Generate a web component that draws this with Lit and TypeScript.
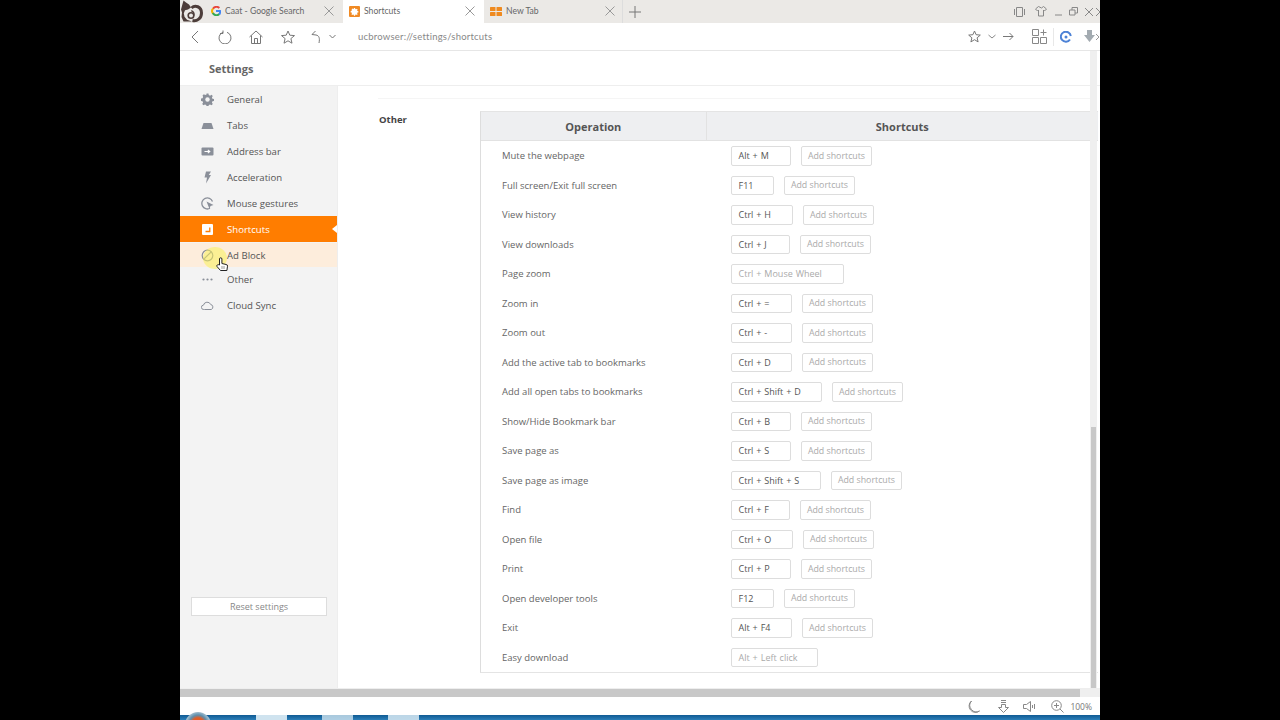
import { LitElement, html, css } from "lit";
import { customElement } from "lit/decorators.js";

const ic = (w: number, h: number, body: any) => html`<svg class="ic" width=${w} height=${h} viewBox="0 0 ${w} ${h}" fill="none" stroke="#777" stroke-width="1">${body}</svg>`;
const s = (str: string) => { const t = document.createElement("template"); t.innerHTML = `<svg xmlns="http://www.w3.org/2000/svg">${str}</svg>`; return Array.from(t.content.firstElementChild!.childNodes); };

const close = () => ic(12, 12, s(`<path d="M1.500 1.500l9 9M10.500 1.500l-9 9" stroke="#999"/>`));
const gearPath = `M6.300 0h2.400l.4 2 1.600.7 1.800-1.100 1.600 1.600-1.100 1.800.7 1.600 2 .4v2.400l-2 .4-.7 1.600 1.100 1.800-1.600 1.600-1.800-1.100-1.600.7-.4 2H6.300l-.4-2-1.600-.7-1.800 1.100-1.600-1.600 1.100-1.800-.7-1.600-2-.4V6.300l2-.4.7-1.600L1.300 2.500l1.600-1.600 1.800 1.100 1.600-.7z`;

const rows: [string, string, number, boolean][] = [
  ["Mute the webpage", "Alt + M", 60, true],
  ["Full screen/Exit full screen", "F11", 43, true],
  ["View history", "Ctrl + H", 62, true],
  ["View downloads", "Ctrl + J", 59, true],
  ["Page zoom", "Ctrl + Mouse Wheel", 113, false],
  ["Zoom in", "Ctrl + =", 61, true],
  ["Zoom out", "Ctrl + -", 61, true],
  ["Add the active tab to bookmarks", "Ctrl + D", 61, true],
  ["Add all open tabs to bookmarks", "Ctrl + Shift + D", 91, true],
  ["Show/Hide Bookmark bar", "Ctrl + B", 60, true],
  ["Save page as", "Ctrl + S", 60, true],
  ["Save page as image", "Ctrl + Shift + S", 90, true],
  ["Find", "Ctrl + F", 59, true],
  ["Open file", "Ctrl + O", 62, true],
  ["Print", "Ctrl + P", 60, true],
  ["Open developer tools", "F12", 43, true],
  ["Exit", "Alt + F4", 61, true],
  ["Easy download", "Alt + Left click", 87, false],
];

const navIcons: Record<string, any> = {
  General: ic(13, 13, s(`<g transform="translate(.5 .5) scale(.8)"><path d="${gearPath}" fill="#8a8f99" stroke="none"/><circle cx="7.500" cy="7.500" r="2.800" fill="#f3f3f3" stroke="none"/></g>`)),
  Tabs: ic(13, 13, s(`<path d="M0.500 10h12L10.500 4H2.500z" fill="#8a8f99" stroke="none"/>`)),
  "Address bar": ic(13, 13, s(`<rect x="0.500" y="2.500" width="12" height="8" rx="1" fill="#8a8f99" stroke="none"/><path d="M3.500 6.500h4.500M6.800 4.800l2 1.700-2 1.700" stroke="#fff" stroke-width="1.100"/>`)),
  Acceleration: ic(13, 13, s(`<path d="M5 0.500h5L7.800 4H10L5 12.500 6 6.500H3.500z" fill="#8a8f99" stroke="none"/>`)),
  "Mouse gestures": ic(13, 13, s(`<path d="M11.500 4.500A5.500 5.500 0 1 0 9 11.300" stroke="#8a8f99" stroke-width="1.300"/><path d="M5.500 4.500l7 3.500-3 1-1 3z" fill="#8a8f99" stroke="none"/>`)),
  Shortcuts: ic(13, 13, s(`<rect x="1" y="1" width="11" height="11" rx="1" fill="#fff" stroke="none"/><path d="M8.800 4.500v4H4.500" stroke="#ff7d00" stroke-width="1.300"/>`)),
  "Ad Block": ic(13, 13, s(`<circle cx="6.500" cy="6.500" r="5.300" stroke="#8a8f99" stroke-width="1.200"/><path d="M2.800 10.200l7.400-7.400" stroke="#8a8f99" stroke-width="1.200"/>`)),
  Other: ic(13, 13, s(`<g fill="#8a8f99" stroke="none"><circle cx="2.500" cy="6.500" r="1.100"/><circle cx="6.500" cy="6.500" r="1.100"/><circle cx="10.500" cy="6.500" r="1.100"/></g>`)),
  "Cloud Sync": ic(13, 13, s(`<path d="M3.500 10.500H2.800a2.200 2.200 0 0 1-.3-4.400 3.800 3.800 0 0 1 7.200-.6 2.600 2.600 0 0 1 .5 5H3.500z" stroke="#8a8f99" stroke-width="1"/>`)),
};
const navs = ["General", "Tabs", "Address bar", "Acceleration", "Mouse gestures", "Shortcuts", "Ad Block", "Other", "Cloud Sync"];
const navClass: Record<string, string> = { Shortcuts: "nav active", "Ad Block": "nav hover", Other: "nav short" };

@customElement("app-root")
export class AppRoot extends LitElement {
  static styles = css`
    :host { display: flex; justify-content: center; width: 1280px; height: 720px; background: #000; overflow: hidden; font-family: "Open Sans", "Liberation Sans", sans-serif; }
    .win { width: 920px; height: 720px; background: #fff; display: flex; flex-direction: column; position: relative; overflow: hidden; }
    .ic { display: block; flex: none; }
    .tabbar { height: 23px; background: #ebe9e6; display: flex; align-items: center; flex: none; font-family: Lato, "Open Sans", sans-serif; font-size: 8.600px; color: #666; }
    .logo { width: 24px; }
    .tab { height: 23px; display: flex; align-items: center; position: relative; box-sizing: border-box; padding-bottom: 1px; }
    .tab .ic { margin-right: 4px; }
    .tab .t { flex: 1; white-space: nowrap; }
    .tab1 { width: 135px; padding-left: 7px; margin-right: 4px; }
    .tab2 { width: 141px; padding-left: 6px; padding-right: 4px; background: #fff; }
    .tab3 { width: 139px; padding-left: 6px; padding-right: 2px; border-right: 1px solid #ddd; }
    .plus { margin-left: 6px; }
    .winbtns { margin-left: auto; display: flex; align-items: center; }
    .toolbar { height: 27px; display: flex; align-items: center; flex: none; border-bottom: 1px solid #e6e6e6; }
    .left { display: flex; align-items: center; width: 178px; padding-left: 9px; box-sizing: border-box; }
    .url { font-family: Lato, "Open Sans", sans-serif; font-size: 9.500px; color: #888; letter-spacing: 0.220px; flex: 1; }
    .right { display: flex; align-items: center; }
    .sep { width: 1px; height: 18px; background: #e8e8e8; margin: 0 6px; }
    .head { height: 35px; flex: none; display: flex; align-items: center; padding-left: 29px; box-sizing: border-box; border-bottom: 1px solid #eee; font-size: 11px; font-weight: 700; color: #666; }
    .body { height: 602px; flex: none; display: flex; overflow: hidden; }
    .side { width: 158px; flex: none; background: #f3f3f3; border-right: 1px solid #eee; box-sizing: border-box; display: flex; flex-direction: column; }
    .nav { height: 26px; flex: none; display: flex; align-items: center; font-size: 9.600px; color: #555; padding-left: 21px; gap: 13px; box-sizing: border-box; position: relative; }
    .nav.active { background: #ff7d00; color: #fff; margin-bottom: 1px; }
    .nav.active::after { content: ""; position: absolute; right: 0; top: 9px; border: 4px solid transparent; border-right: 5px solid #fff; border-left: 0; }
    .nav.hover { background: #fdeddc; height: 24px; }
    .nav.short { height: 25px; }
    .reset { margin: auto 10px 72px 11px; height: 19px; background: #fff; border: 1px solid #ddd; display: flex; align-items: center; justify-content: center; font-size: 9px; color: #888; box-sizing: border-box; flex: none; }
    .main { flex: 1; padding: 12px 0 0 41px; min-width: 0; box-sizing: border-box; overflow: hidden; }
    .rule { height: 1px; background: #f5f5f5; margin: 0 10px 12px -1px; }
    .sec { display: flex; width: 720px; }
    .sec-title { width: 101px; flex: none; font-size: 9.500px; font-weight: 700; color: #444; padding-top: 2px; line-height: 14px; }
    .table { width: 618px; flex: none; border-left: 1px solid #ddd; border-top: 1px solid #e4e4e4; border-bottom: 1px solid #e4e4e4; box-sizing: border-box; }
    .thead { display: flex; height: 29px; background: #eeeff1; border-bottom: 1px solid #e2e2e2; font-size: 11px; font-weight: 700; color: #555; box-sizing: border-box; }
    .thead div { display: flex; align-items: center; justify-content: center; }
    .c1 { width: 225px; border-right: 1px solid #e2e2e2; }
    .c2 { width: 392px; }
    .row { height: 29.500px; display: flex; align-items: center; font-size: 9.500px; color: #666; }
    .lab { width: 250px; padding-left: 21px; box-sizing: border-box; flex: none; white-space: nowrap; }
    .inp, .add { height: 19.500px; border: 1px solid #ddd; border-radius: 2px; box-sizing: border-box; display: flex; align-items: center; white-space: nowrap; }
    .inp { padding-left: 6.500px; color: #555; margin-right: 10px; font-size: 9px; word-spacing: 0.600px; }
    .inp.off { color: #aaa; margin: 0; }
    .add { color: #aaa; width: 71px; justify-content: center; font-size: 8.800px; }
    .vtrack { position: absolute; right: 3px; top: 51px; bottom: 32px; width: 7px; background: #efefef; }
    .vthumb { position: absolute; right: 4px; top: 427px; bottom: 32px; width: 5px; background: #c8c8c8; }
    .hbar { height: 9px; flex: none; background: #efefef; border-top: 1px solid #eee; box-sizing: border-box; }
    .hthumb { width: 900px; height: 8px; background: #c8c8c8; }
    .status { height: 18px; flex: none; display: flex; align-items: center; justify-content: flex-end; gap: 14px; padding-right: 8px; font-size: 8.500px; color: #777; }
    .gapfix { width: 0; margin-left: -9.500px; }
    .pct { margin-left: -8px; }
    .task { flex: 1; background: linear-gradient(#0f5a94, #2c7fb8); position: relative; }
    .tbtn { position: absolute; top: 0; height: 5px; width: 31px; background: #cfe3ef; }
    .orb { position: absolute; left: 5px; top: -3px; width: 26px; height: 26px; border-radius: 50%; background: radial-gradient(circle at 50% 45%, #e25c26 0 30%, #5c8fae 45%, #c9d6de 70%); }
    .spot { position: absolute; left: 23px; top: 247px; width: 24px; height: 22px; border-radius: 50%; background: rgba(250, 240, 90, .55); pointer-events: none; }
    .hand { position: absolute; left: 36px; top: 257px; pointer-events: none; }
  `;

  render() {
    return html`<div class="win">
      <div class="tabbar">
        <div class="logo">${ic(24, 23, s(`<path d="M1 9.500L2.500 4 3.500 .5 6 2.500l3 2 2 3-3 2-3 .7-1.200 3 .7 3.500 2.500 3 5 1.800H3.500L1.500 17l.5-4.500z" fill="#4d3d3a" stroke="none"/><path d="M11.500 8C15 4.500 21.500 6.500 21.500 13c0 5.500-4.500 8.500-9 7.500" stroke="#4d3d3a" stroke-width="3"/><circle cx="11" cy="15.500" r="2.800" stroke="#4d3d3a" stroke-width="1.600"/><path d="M13.800 15.500c.5-2-.5-4-2.500-4.800" stroke="#4d3d3a" stroke-width="1.400"/>`))}</div>
        <div class="tab tab1">
          ${ic(10, 10, s(`<g fill="none" stroke-width="2"><path d="M8.300 2A4 4 0 0 0 2 2.800" stroke="#e8453c"/><path d="M2 2.500a4 4 0 0 0 0 5" stroke="#f4b400"/><path d="M1.800 7a4 4 0 0 0 6.500 1" stroke="#34a853"/><path d="M8.300 8.300A4 4 0 0 0 9 5H5" stroke="#4285f4"/></g>`))}
          <span class="t">Caat - Google Search</span>${close()}
        </div>
        <div class="tab tab2">
          ${ic(11, 11, s(`<rect width="11" height="11" rx="1" fill="#f08a24" stroke="none"/><g transform="translate(2 2) scale(.47)"><path d="${gearPath}" fill="#fff" stroke="none"/></g>`))}
          <span class="t">Shortcuts</span>${close()}
        </div>
        <div class="tab tab3">
          ${ic(12, 9, s(`<g fill="#ef8a1f" stroke="none"><rect width="5.500" height="4" rx=".5"/><rect x="6.500" width="5.500" height="4" rx=".5"/><rect y="5" width="5.500" height="4" rx=".5"/><rect x="6.500" y="5" width="5.500" height="4" rx=".5"/></g>`))}
          <span class="t">New Tab</span>${close()}
        </div>
        <div class="plus">${ic(12, 12, s(`<path d="M6 0v12M0 6h12" stroke="#777"/>`))}</div>
        <div class="winbtns">
          ${ic(11, 10, s(`<path d="M2.500 .5h6v9h-6zM.5 2v6M10.500 2v6" stroke="#888"/>`))}
          <span style="width:10px"></span>
          ${ic(12, 11, s(`<path d="M3.500 .5L.5 3l2 2 1-1v6h5V4l1 1 2-2-3-2.500-2 1.500z" stroke="#888"/>`))}
          <span style="width:7px"></span>
          ${ic(9, 9, s(`<path d="M1 8h7" stroke="#888"/>`))}
          <span style="width:6px"></span>
          ${ic(9, 9, s(`<path d="M.5 3h5.500v5H.5zM3 3V.5h5.500V6H6" stroke="#888"/>`))}
          <span style="width:6px"></span>
          ${ic(10, 10, s(`<path d="M1 1l8 8M9 1L1 9" stroke="#888"/>`))}
          <span style="width:2px"></span>
          ${ic(4, 10, s(`<path d="M0 1l4 4-4 4" stroke="#888"/>`))}
        </div>
      </div>
      <div class="toolbar">
        <div class="left">
          ${ic(12, 14, s(`<path d="M9 1L3 7l6 6" stroke="#777"/>`))}
          <span style="width:17px"></span>
          ${ic(14, 14, s(`<path d="M5 2.300a6 6 0 1 0 4 0M5 .5v3H2" stroke="#777"/>`))}
          <span style="width:17px"></span>
          ${ic(14, 14, s(`<path d="M.5 7L7 1l6.500 6M2.500 5.500v8h9v-8M5.500 13.500v-5h3v5" stroke="#777"/>`))}
          <span style="width:18px"></span>
          ${ic(14, 14, s(`<path d="M7 1l1.800 4.200 4.700.4-3.600 3 1.100 4.600L7 10.800l-4 2.400 1.100-4.600-3.600-3 4.700-.4z" stroke="#777"/>`))}
          <span style="width:16px"></span>
          ${ic(10, 14, s(`<path d="M4.500 1L1 4.500 5 5c3 .5 4 3 3 8" stroke="#777"/>`))}
          <span style="width:8px"></span>
          ${ic(7, 5, s(`<path d="M.5 1l3 3 3-3" stroke="#777"/>`))}
        </div>
        <div class="url">ucbrowser://settings/shortcuts</div>
        <div class="right">
          ${ic(13, 13, s(`<path d="M6.500 1l1.600 3.700 4.200.4-3.200 2.700 1 4.100-3.600-2.200-3.600 2.200 1-4.100L.7 5.100l4.200-.4z" stroke="#777"/>`))}
          <span style="width:7px"></span>
          ${ic(8, 5, s(`<path d="M.5 1l3.500 3 3.500-3" stroke="#888"/>`))}
          <span style="width:7px"></span>
          ${ic(11, 9, s(`<path d="M0 4.500h10M6.500 1L10 4.500 6.500 8" stroke="#777"/>`))}
          <span style="width:18px"></span>
          ${ic(15, 15, s(`<path d="M.5 .5h6v6h-6zM.5 8.500h6v6h-6zM8.500 8.500h6v6h-6zM11.500 .5v6M8.500 3.500h6" stroke="#888"/>`))}
          <div class="sep"></div>
          ${ic(12, 12, s(`<path d="M10 8.500A5 5 0 1 1 10.800 5" stroke="#4d82d6" stroke-width="2"/><circle cx="6" cy="6" r="1.500" fill="#4d82d6" stroke="none"/>`))}
          <span style="width:12px"></span>
          ${ic(16, 13, s(`<path d="M3 0h5v5h3L5.500 12 0 5h3z" fill="#a3abb1" stroke="none"/><path d="M12 4l3 3-3 3" stroke="#999"/>`))}
        </div>
      </div>
      <div class="head">Settings</div>
      <div class="body">
        <aside class="side">
          ${navs.map((n) => html`<div class=${navClass[n] ?? "nav"}>${navIcons[n]}<span>${n}</span></div>`)}
          <div class="reset">Reset settings</div>
        </aside>
        <main class="main">
          <div class="rule"></div>
          <section class="sec">
            <div class="sec-title">Other</div>
            <div class="table">
              <div class="thead"><div class="c1">Operation</div><div class="c2">Shortcuts</div></div>
              ${rows.map(([lab, key, w, editable]) => html`<div class="row">
                <div class="lab">${lab}</div>
                <div class=${editable ? "inp" : "inp off"} style="width:${w}px">${key}</div>
                ${editable ? html`<div class="add">Add shortcuts</div>` : ""}
              </div>`)}
            </div>
          </section>
        </main>
      </div>
      <div class="hbar"><div class="hthumb"></div></div>
      <div class="status">
        ${ic(12, 13, s(`<path d="M3.500 1a6 6 0 0 0 8 10A6.500 6.500 0 0 1 3.500 1z" stroke="#888"/>`))}
        <span class="gapfix"></span>
        ${ic(11, 13, s(`<path d="M3 .5h5M3 2.500h5M3.500 4.500h4v3h3L5.500 12.500.5 7.500h3z" stroke="#888"/>`))}
        ${ic(14, 11, s(`<path d="M.5 3.500h3L7.500 .5v10l-4-3h-3zM9.500 4v3M11.500 3v5" stroke="#888"/>`))}
        ${ic(13, 13, s(`<circle cx="5.500" cy="5.500" r="4.800" stroke="#888"/><path d="M3 5.500h5M5.500 3v5M9 9l3.500 3.500" stroke="#888"/>`))}
        <span class="pct">100%</span>
      </div>
      <div class="task">
        <div class="tbtn" style="left:76px"></div>
        <div class="tbtn" style="left:142px;opacity:.8"></div>
        <div class="tbtn" style="left:208px;opacity:.9"></div>
        <div class="orb"></div>
      </div>
      <div class="vtrack"></div>
      <div class="vthumb"></div>
      <div class="spot"></div>
      <div class="hand">${ic(13, 16, s(`<path d="M3.500 8V2a1.200 1.200 0 0 1 2.400 0v4.500l4.200 1a1.500 1.500 0 0 1 1.400 1.700l-.6 4.300H4.500L1 9.500c-.8-1.300 1-2.400 2.500-1.500z" fill="#fff" stroke="#222"/><path d="M6 9v3M8 9v3" stroke="#555" stroke-width=".6"/>`))}</div>
    </div>`;
  }
}
